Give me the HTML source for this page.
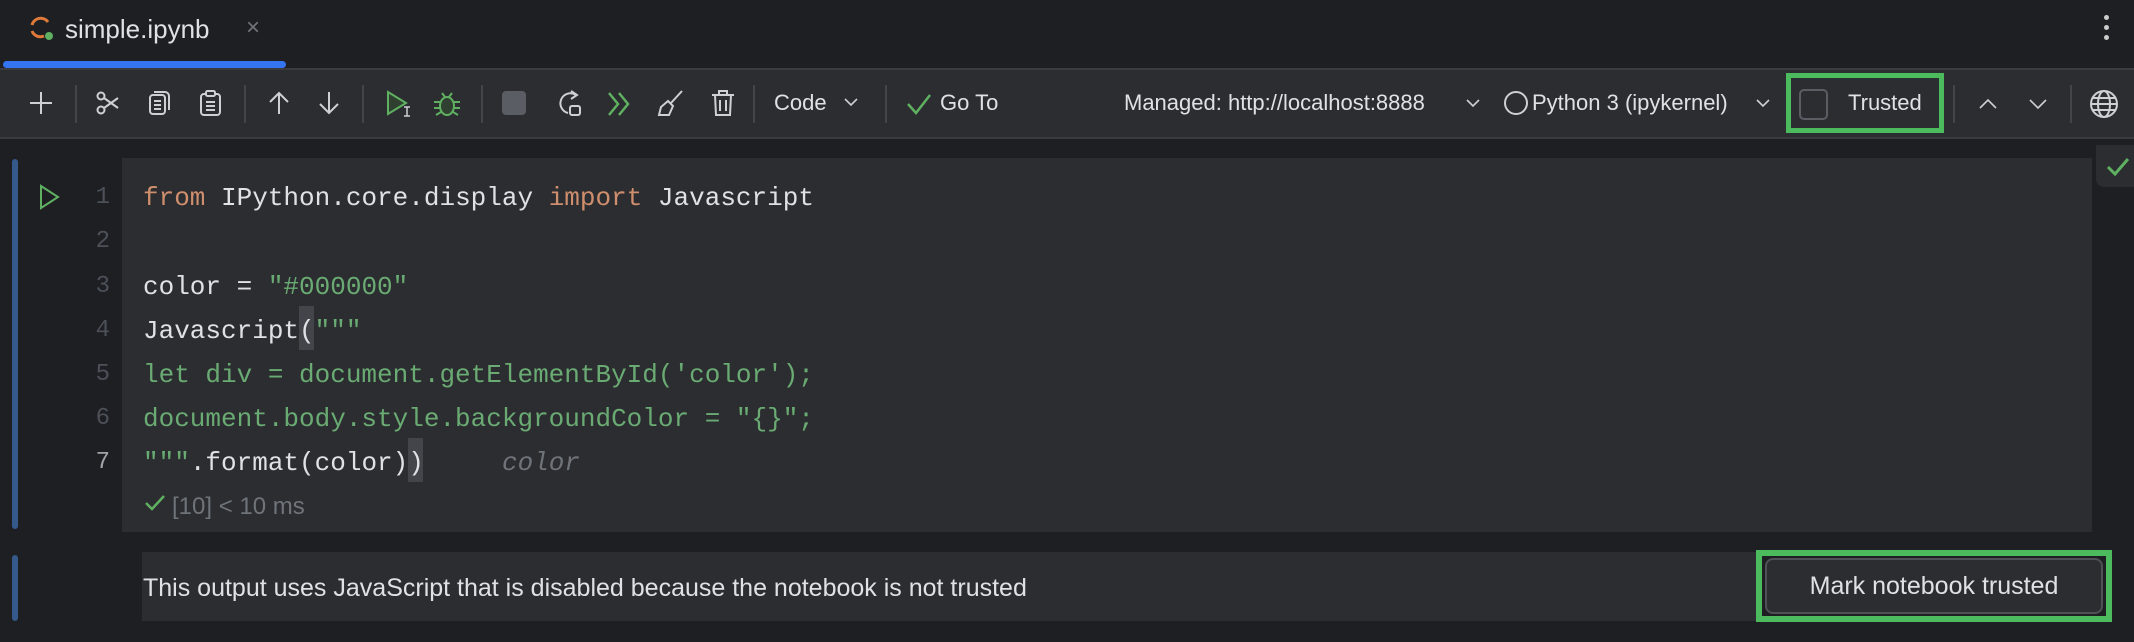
<!DOCTYPE html>
<html><head><meta charset="utf-8"><style>
*{margin:0;padding:0;box-sizing:border-box}
body{width:2134px;height:642px;background:#1e1f22;position:relative;overflow:hidden;font-family:"Liberation Sans",sans-serif;color:#dfe1e5}
.a{position:absolute}
.t{font-size:22px;white-space:nowrap;line-height:1}
.sep{position:absolute;top:85px;width:2px;height:38px;background:#43454a}
.mono{font-family:"Liberation Mono",monospace;font-size:26px;white-space:pre;line-height:1}
.ln{position:absolute;left:88px;width:22px;text-align:right;font-family:"Liberation Mono",monospace;font-size:24px;color:#4b5059;line-height:1}
.k{color:#cf8e6d}.s{color:#6aab73}
svg{position:absolute;overflow:visible}
</style></head><body>
<!-- tab -->
<svg style="left:28px;top:15px" width="26" height="26" viewBox="0 0 26 26"><path d="M4 10 A9 9 0 0 1 20 7" stroke="#e07a3a" stroke-width="3" fill="none"/><path d="M4 16 A9 9 0 0 0 16 21" stroke="#e07a3a" stroke-width="3" fill="none"/><circle cx="21" cy="21" r="4" fill="#5fb061"/></svg>
<div class="a" style="left:65px;top:14px;font-size:26px;color:#dfe1e5">simple.ipynb</div>
<div class="a" style="left:246px;top:14px;font-size:24px;color:#6f737a">×</div>
<div class="a" style="left:3px;top:61px;width:283px;height:7px;background:#3574f0;border-radius:4px"></div>
<div class="a" style="left:2104px;top:15px;width:5px;height:5px;border-radius:50%;background:#ccc;box-shadow:0 10px 0 #ccc,0 20px 0 #ccc"></div>
<!-- toolbar -->
<div class="a" style="left:0;top:68px;width:2134px;height:71px;background:#2b2d30;border-top:2px solid #393b40;border-bottom:2px solid #393b40"></div>
<svg style="left:29px;top:91px" width="24" height="24"><path d="M12 1V23M1 12H23" stroke="#ced0d6" stroke-width="2"/></svg>
<div class="sep" style="left:75px"></div>
<svg style="left:96px;top:91px" width="24" height="24"><circle cx="5" cy="5" r="3.5" stroke="#ced0d6" stroke-width="2" fill="none"/><circle cx="5" cy="19" r="3.5" stroke="#ced0d6" stroke-width="2" fill="none"/><path d="M8 7L22 17M8 17L22 7" stroke="#ced0d6" stroke-width="2"/></svg>
<svg style="left:148px;top:90px" width="24" height="26"><rect x="2" y="5" width="15" height="19" rx="3" stroke="#ced0d6" stroke-width="2" fill="none"/><path d="M6 2h11a4 4 0 0 1 4 4v14" stroke="#ced0d6" stroke-width="2" fill="none"/><path d="M6 11h7M6 15h7M6 19h7" stroke="#ced0d6" stroke-width="2"/></svg>
<svg style="left:199px;top:90px" width="24" height="26"><rect x="2" y="4" width="19" height="21" rx="3" stroke="#ced0d6" stroke-width="2" fill="none"/><rect x="7" y="1" width="9" height="5" rx="1.5" stroke="#ced0d6" stroke-width="2" fill="#2b2d30"/><path d="M7 12h9M7 16h9M7 20h9" stroke="#ced0d6" stroke-width="2"/></svg>
<div class="sep" style="left:244px"></div>
<svg style="left:267px;top:91px" width="24" height="24"><path d="M12 23V2M3 11L12 2L21 11" stroke="#ced0d6" stroke-width="2" fill="none"/></svg>
<svg style="left:317px;top:91px" width="24" height="24"><path d="M12 1V22M3 13L12 22L21 13" stroke="#ced0d6" stroke-width="2" fill="none"/></svg>
<div class="sep" style="left:362px"></div>
<svg style="left:386px;top:90px" width="26" height="28"><path d="M2 2L20 13L2 24Z" stroke="#5fb061" stroke-width="2" fill="#2f4030"/><path d="M18 17h6M21 17v9M18 26h6" stroke="#ced0d6" stroke-width="1.5"/></svg>
<svg style="left:433px;top:90px" width="28" height="28"><ellipse cx="14" cy="16" rx="7" ry="9" stroke="#5fb061" stroke-width="2" fill="#2f4030"/><path d="M9 3l3 4M19 3l-3 4M1 12h6M21 12h6M1 18h6M21 18h6M3 25l5-3M25 25l-5-3" stroke="#5fb061" stroke-width="2"/></svg>
<div class="sep" style="left:481px"></div>
<div class="a" style="left:502px;top:91px;width:24px;height:24px;background:#5a5d63;border-radius:4px"></div>
<svg style="left:556px;top:89px" width="28" height="28"><path d="M20 6A10 10 0 1 0 12 24" stroke="#ced0d6" stroke-width="2" fill="none"/><path d="M15 2l6 4-6 4" stroke="#ced0d6" stroke-width="2" fill="none"/><rect x="14" y="17" width="10" height="9" rx="2" stroke="#ced0d6" stroke-width="2" fill="none"/></svg>
<svg style="left:606px;top:90px" width="28" height="28"><path d="M3 3l9 11-9 11M13 3l9 11-9 11" stroke="#5fb061" stroke-width="2.5" fill="none"/></svg>
<svg style="left:656px;top:89px" width="28" height="28"><path d="M26 2L15 14" stroke="#ced0d6" stroke-width="2"/><path d="M12 12l5 5-4 9H3l2-8z" stroke="#ced0d6" stroke-width="2" fill="none"/></svg>
<svg style="left:710px;top:89px" width="26" height="28"><path d="M2 6H24M9 6V2h8v4M5 6l1 20h14l1-20M10 11v11M16 11v11" stroke="#ced0d6" stroke-width="2" fill="none"/></svg>
<div class="sep" style="left:753px"></div>
<div class="a t" style="left:774px;top:92px">Code</div>
<svg style="left:844px;top:98px" width="14" height="10"><path d="M1 1l6 6 6-6" stroke="#ced0d6" stroke-width="1.6" fill="none"/></svg>
<div class="sep" style="left:885px"></div>
<svg style="left:906px;top:93px" width="26" height="22"><path d="M2 11l8 9L24 2" stroke="#5fb061" stroke-width="2.5" fill="none"/></svg>
<div class="a t" style="left:940px;top:92px">Go To</div>
<div class="a t" style="left:1124px;top:92px">Managed: http://localhost:8888</div>
<svg style="left:1466px;top:99px" width="14" height="10"><path d="M1 1l6 6 6-6" stroke="#ced0d6" stroke-width="1.6" fill="none"/></svg>
<svg style="left:1504px;top:91px" width="24" height="24"><circle cx="12" cy="12" r="11" stroke="#ced0d6" stroke-width="2" fill="none"/></svg>
<div class="a t" style="left:1532px;top:92px">Python 3 (ipykernel)</div>
<svg style="left:1756px;top:99px" width="14" height="10"><path d="M1 1l6 6 6-6" stroke="#ced0d6" stroke-width="1.6" fill="none"/></svg>
<div class="a" style="left:1786px;top:73px;width:158px;height:60px;border:5px solid #4cbb5d"></div>
<div class="a" style="left:1799px;top:89px;width:29px;height:31px;border:2px solid #5a5d63;border-radius:5px"></div>
<div class="a t" style="left:1848px;top:92px">Trusted</div>
<div class="sep" style="left:1953px"></div>
<svg style="left:1979px;top:98px" width="18" height="12"><path d="M1 10l8-8 8 8" stroke="#ced0d6" stroke-width="1.6" fill="none"/></svg>
<svg style="left:2029px;top:98px" width="18" height="12"><path d="M1 2l8 8 8-8" stroke="#ced0d6" stroke-width="1.6" fill="none"/></svg>
<div class="sep" style="left:2070px"></div>
<svg style="left:2090px;top:90px" width="28" height="28"><circle cx="14" cy="14" r="13" stroke="#ced0d6" stroke-width="2" fill="none"/><ellipse cx="14" cy="14" rx="6" ry="13" stroke="#ced0d6" stroke-width="2" fill="none"/><path d="M1 14h26M3 8h22M3 20h22" stroke="#ced0d6" stroke-width="2"/></svg>
<!-- code cell -->
<div class="a" style="left:12px;top:159px;width:6px;height:370px;background:#35598b;border-radius:3px"></div>
<div class="a" style="left:122px;top:158px;width:1970px;height:374px;background:#2b2d30"></div>
<div class="a" style="left:2096px;top:145px;width:38px;height:42px;background:#2b2d30;border-radius:0 0 0 8px"></div>
<svg style="left:2106px;top:157px" width="24" height="20"><path d="M2 10l7 7L22 2" stroke="#5fb061" stroke-width="3" fill="none"/></svg>
<svg style="left:39px;top:184px" width="22" height="26"><path d="M2 2L19 13L2 24Z" stroke="#5fb061" stroke-width="2" fill="none"/></svg>
<div class="ln" style="top:186px">1</div>
<div class="ln" style="top:230px">2</div>
<div class="ln" style="top:275px">3</div>
<div class="ln" style="top:319px">4</div>
<div class="ln" style="top:363px">5</div>
<div class="ln" style="top:407px">6</div>
<div class="ln" style="top:451px;color:#a1a3ab">7</div>
<div class="a mono" style="left:143px;top:185px"><span class="k">from</span> IPython.core.display <span class="k">import</span> Javascript</div>
<div class="a mono" style="left:143px;top:274px">color = <span class="s">"#000000"</span></div>
<div class="a" style="left:299px;top:306px;width:15px;height:44px;background:#43454a"></div>
<div class="a mono" style="left:143px;top:318px">Javascript(<span class="s">"""</span></div>
<div class="a mono s" style="left:143px;top:362px">let div = document.getElementById('color');</div>
<div class="a mono s" style="left:143px;top:406px">document.body.style.backgroundColor = "{}";</div>
<div class="a" style="left:408px;top:438px;width:15px;height:44px;background:#43454a"></div>
<div class="a mono" style="left:143px;top:450px"><span class="s">"""</span>.format(color))</div>
<div class="a mono" style="left:502px;top:450px;color:#6f737a;font-style:italic">color</div>
<svg style="left:144px;top:494px" width="22" height="18"><path d="M2 9l6 6L20 2" stroke="#5fb061" stroke-width="2.5" fill="none"/></svg>
<div class="a" style="left:172px;top:493px;font-size:24px;color:#6f737a">[10] &lt; 10 ms</div>
<!-- output -->
<div class="a" style="left:12px;top:555px;width:6px;height:66px;background:#35598b;border-radius:3px"></div>
<div class="a" style="left:142px;top:552px;width:1968px;height:69px;background:#2b2d30"></div>
<div class="a" style="left:143px;top:574px;font-size:25px;white-space:nowrap">This output uses JavaScript that is disabled because the notebook is not trusted</div>
<div class="a" style="left:1756px;top:550px;width:356px;height:72px;border:6px solid #4cbb5d;background:#1e1f22"></div>
<div class="a" style="left:1765px;top:558px;width:338px;height:56px;border:2px solid #4e5157;border-radius:8px;background:#2b2d30;font-size:25px;text-align:center;line-height:52px">Mark notebook trusted</div>
</body></html>
